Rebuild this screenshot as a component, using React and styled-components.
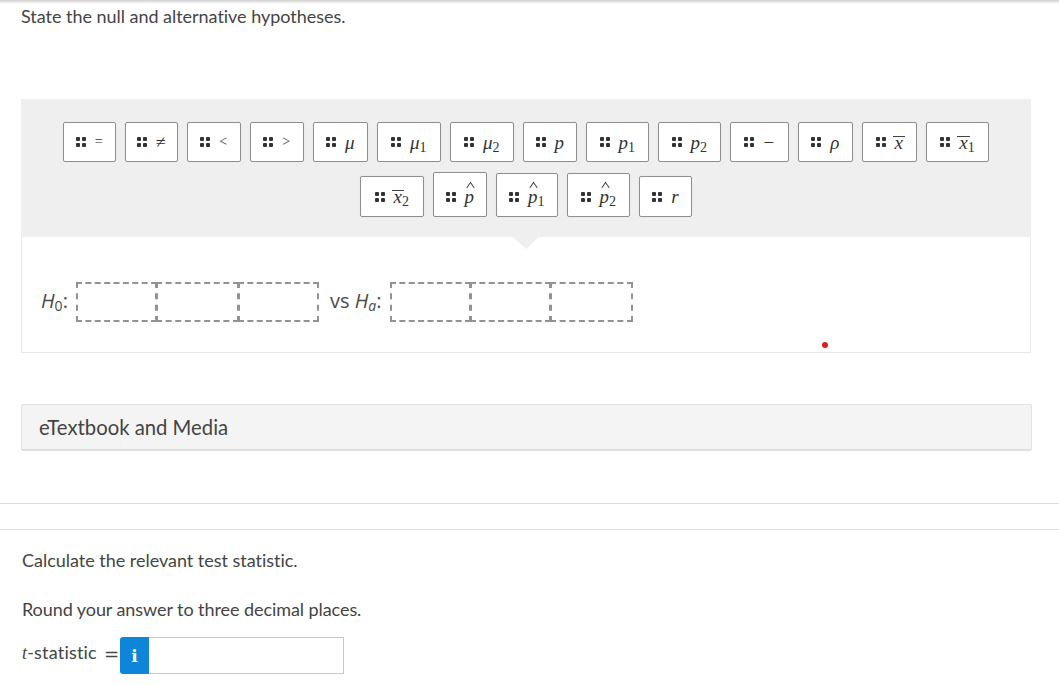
import React from "react";
import styled, { createGlobalStyle } from "styled-components";

const Global = createGlobalStyle`
  html, body { margin: 0; padding: 0; background: #fff; }
  body { font-family: Lato, "Open Sans", sans-serif; color: #444; font-size: 18px; }
`;
const Page = styled.div`
  width: 1059px; height: 685px; overflow: hidden; position: relative; box-sizing: border-box;
`;
const TopShade = styled.div`
  height: 4px; background: linear-gradient(#d0d0d0, #fff);
`;
const Section = styled.section`
  padding: 0 28px 0 21px;
`;
const Prompt = styled.p`
  margin: ${p => p.$top || 0}px 0 0; font-size: 18px; line-height: 24px;
  letter-spacing: ${p => p.$ls || 0}px;
  margin-left: ${p => p.$left || 0}px;
`;
const Toolbar = styled.div`
  margin-top: 71px; height: 138px; box-sizing: border-box; background: #efefef;
  padding-top: 23px; display: flex; flex-direction: column; align-items: center; gap: 10px;
`;
const ChipRow = styled.div`
  display: flex; align-items: flex-end; gap: 9.5px; height: ${p => p.$h}px;
`;
const Chip = styled.div`
  width: ${p => p.$w}px; height: ${p => p.$h}px; box-sizing: border-box; background: #fff;
  padding-top: ${p => p.$h > 41 ? p.$h - 41 : 0}px;
  border: 1px solid #8f8f8f; border-radius: 2px; display: flex; align-items: center;
  justify-content: center; gap: 9px; box-shadow: 0 0 2px rgba(0,0,0,.05);
`;
const Grip = styled.span`
  display: grid; grid-template-columns: 4px 4px; gap: 2px; flex: none;
  i { width: 4px; height: 4px; background: #333; border-radius: 1px; display: block; }
`;
const Sym = styled.span`
  font-family: "Liberation Serif", serif; font-style: ${p => p.$plain ? "normal" : "italic"};
  font-size: ${p => p.$size || 19}px; color: #333; line-height: 1; position: relative; display: inline-block;
  sub { font-style: normal; font-size: 14px; line-height: 0; vertical-align: -3px; }
`;
const Bar = styled.span`
  position: relative; display: inline-block;
  &::before {
    content: ""; position: absolute; left: -2px; right: -2px; top: 3px; height: 1px; background: #444;
  }
`;
const Hat = styled.span`
  position: relative; display: inline-block;
  &::before {
    content: ""; position: absolute; left: 2px; top: -3px; width: 6px; height: 6px;
    border-left: 1px solid #333; border-top: 1px solid #333; transform: rotate(45deg) skew(10deg, 10deg);
  }
`;
const AnswerCard = styled.div`
  position: relative; height: 116px; box-sizing: border-box; border: 1px solid #e8e8e8; border-top: 0;
  padding: 45px 0 0 19px; display: flex; align-items: flex-start;
  &::before {
    content: ""; position: absolute; left: 491px; top: 0; border: 13px solid transparent;
    border-top: 12px solid #efefef; border-bottom: 0;
  }
`;
const HypLabel = styled.span`
  font-family: "Open Sans", "DejaVu Sans", sans-serif; font-size: 20px; line-height: 38px; color: #4a4a4a;
  width: ${p => p.$w}px; padding-left: ${p => p.$pad || 0}px; box-sizing: border-box; flex: none; white-space: nowrap;
  em { font-style: italic; }
  sub { font-size: 14px; line-height: 0; vertical-align: -3px; }
`;
const DropGroup = styled.div`
  display: flex; flex: none;
`;
const Drop = styled.div`
  width: ${p => p.$w || 81}px; height: 40px; box-sizing: border-box; border: 2px dashed #929292;
  margin-left: ${p => p.$first ? 0 : -1}px; background: #fff;
`;
const RedDot = styled.span`
  position: absolute; left: 800px; top: 105px; width: 6px; height: 6px; background: #dc1f1f; border-radius: 50%;
`;
const Media = styled.div`
  margin-top: 51px; height: 47px; box-sizing: border-box; background: #f4f4f4; border: 1px solid #e3e3e3;
  border-bottom: 2px solid #e0e0e0; border-radius: 2px; padding-left: 17px; display: flex; align-items: center;
  font-size: 20.3px; color: #444; width: 1011px;
`;
const Rule = styled.hr`
  border: 0; border-top: 1px solid #dcdcdc; margin: ${p => p.$top}px 0 0;
`;
const StatRow = styled.div`
  margin-top: 16px; display: flex; align-items: center; height: 37px;
`;
const StatLabel = styled.span`
  font-size: 18px; width: 83px; box-sizing: border-box; padding: 0 0 6px 1px; flex: none; white-space: nowrap;
  letter-spacing: 0.2px;
  em { font-family: "Liberation Serif", serif; }
`;
const Equals = styled.span`
  font-family: "DejaVu Sans", sans-serif; font-size: 18px; width: 16px; flex: none; padding-bottom: 5px;
`;
const InfoBtn = styled.button`
  width: 29px; height: 37px; flex: none; border: 0; padding: 0; background: #0e85d8; color: #fff;
  border-radius: 3px 0 0 3px; font-family: "DejaVu Serif", serif; font-weight: 700; font-size: 17px;
`;
const Input = styled.div`
  width: 195px; height: 37px; box-sizing: border-box; border: 1px solid #c8c8c8; border-left: 0; background: #fff;
`;

const S = ({ children, ...rest }) => <Sym {...rest}>{children}</Sym>;
const Dots = () => <Grip><i /><i /><i /><i /></Grip>;

const row1 = [
  [52.5, <S $plain $size={14}>=</S>],
  [52.5, <S $plain $size={18}>≠</S>],
  [53.5, <S $plain $size={14}>&lt;</S>],
  [53.5, <S $plain $size={14}>&gt;</S>],
  [54.5, <S>μ</S>],
  [63.5, <S>μ<sub>1</sub></S>],
  [63.5, <S>μ<sub>2</sub></S>],
  [53.5, <S>p</S>],
  [62.5, <S>p<sub>1</sub></S>],
  [62.5, <S>p<sub>2</sub></S>],
  [58.5, <S $plain>−</S>],
  [54.5, <S>ρ</S>],
  [54.5, <S><Bar>x</Bar></S>],
  [63, <S><Bar>x</Bar><sub>1</sub></S>],
];
const row2 = [
  [63.5, 41, <S><Bar>x</Bar><sub>2</sub></S>],
  [53.5, 45, <S><Hat>p</Hat></S>],
  [61.5, 44, <S><Hat>p</Hat><sub>1</sub></S>],
  [62.5, 44, <S><Hat>p</Hat><sub>2</sub></S>],
  [53, 41, <S>r</S>],
];

export default function App() {
  return (
    <Page>
      <Global />
      <TopShade />
      <Section>
        <Prompt $ls={-0.03}>State the null and alternative hypotheses.</Prompt>
        <Toolbar>
          <ChipRow $h={40}>
            {row1.map(([w, c], i) => <Chip key={i} $w={w} $h={40}><Dots />{c}</Chip>)}
          </ChipRow>
          <ChipRow $h={45}>
            {row2.map(([w, h, c], i) => <Chip key={i} $w={w} $h={h}><Dots />{c}</Chip>)}
          </ChipRow>
        </Toolbar>
        <AnswerCard>
          <HypLabel $w={35}><em>H</em><sub>0</sub>:</HypLabel>
          <DropGroup>
            <Drop $first /><Drop $w={83} /><Drop />
          </DropGroup>
          <HypLabel $w={71} $pad={11}>vs <em>H</em><sub><em>a</em></sub>:</HypLabel>
          <DropGroup>
            <Drop $first /><Drop /><Drop $w={83} />
          </DropGroup>
          <RedDot />
        </AnswerCard>
        <Media>eTextbook and Media</Media>
      </Section>
      <Rule $top={52} />
      <Rule $top={25} />
      <Section>
        <Prompt $top={18} $left={1} $ls={-0.02}>Calculate the relevant test statistic.</Prompt>
        <Prompt $top={25} $left={1} $ls={-0.07}>Round your answer to three decimal places.</Prompt>
        <StatRow>
          <StatLabel><em>t</em>-statistic</StatLabel>
          <Equals>=</Equals>
          <InfoBtn>i</InfoBtn>
          <Input />
        </StatRow>
      </Section>
    </Page>
  );
}
